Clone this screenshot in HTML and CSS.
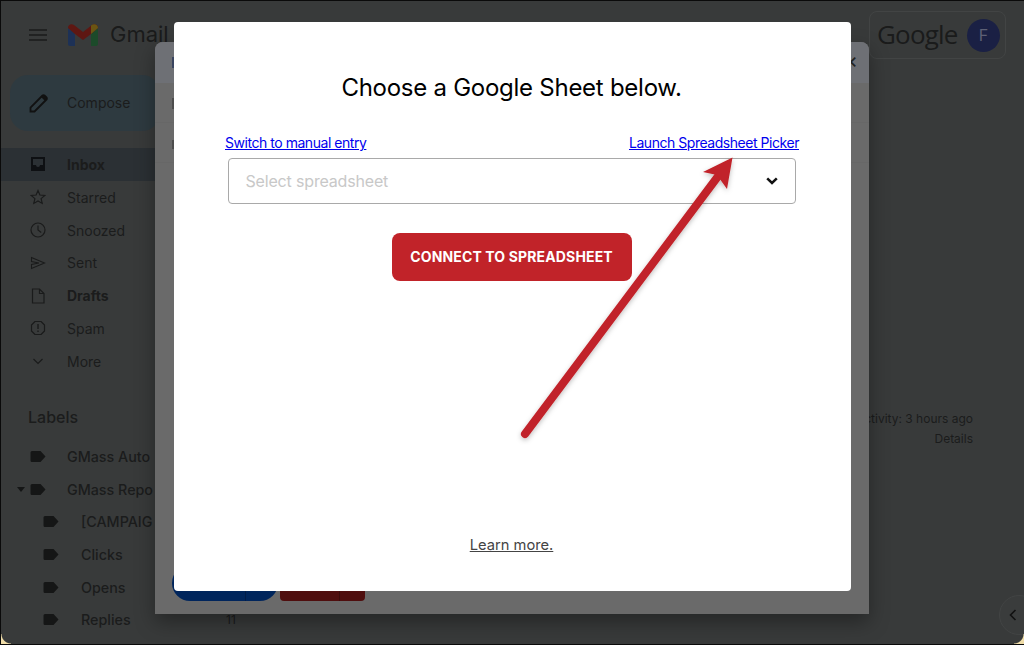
FILE: index.html
```html
<!DOCTYPE html>
<html lang="en">
<head>
<meta charset="utf-8">
<title>Choose a Google Sheet</title>
<link rel="stylesheet" href="styles.css">
</head>
<body>
<div class="window">
  <header class="topbar">
    <svg class="menu-icon" width="18" height="12" viewBox="0 0 18 12"><path d="M0 1h18M0 6h18M0 11h18" stroke="#1a1b1b" stroke-width="1.7"/></svg>
    <svg class="m-logo" width="30" height="23" viewBox="0 0 30 23">
      <path d="M0 4v16a2 2 0 0 0 2 2h5V10z" fill="#1d3156"/>
      <path d="M30 4v16a2 2 0 0 1-2 2h-5V10z" fill="#1c4a2a"/>
      <path d="M0 4c0-4 4-4.500 6-3l9 7 9-7c2-1.500 6-1 6 3l-7 6-8 6-8-6z" fill="#5e1712"/>
      <path d="M23 1.500c3-2.500 7-1 7 2.500l-7 6z" fill="#6b5512"/>
    </svg>
    <span class="brand">Gmail</span>
    <div class="account">
      <span class="google">Google</span>
      <span class="avatar">F</span>
    </div>
  </header>
  <div class="workspace">
    <nav class="sidebar">
      <div class="compose">
        <svg width="20" height="20" viewBox="0 0 20 20"><path d="M1.500 18.500v-4L13.500 2.500a1.400 1.400 0 0 1 2 0l2 2a1.400 1.400 0 0 1 0 2L5.500 18.500z" fill="none" stroke="#111" stroke-width="1.800"/><path d="M12 4l4 4 1.800-2.500-3-3.500z" fill="#111"/></svg>
        <span class="compose-text">Compose</span>
      </div>
      <ul class="folders">
        <li class="folder active"><svg class="ico" viewBox="0 0 16 16"><path d="M1 1h14v14H1z" fill="#0e1013"/><path d="M3 3h10v6h-3a2 2 0 0 1-4 0H3z" fill="#2b3034"/></svg><b>Inbox</b></li>
        <li class="folder"><svg class="ico" viewBox="0 0 16 16"><path d="M8 1.500l1.900 4.500 4.900.4-3.700 3.200 1.100 4.800L8 12l-4.200 2.400 1.100-4.800L1.200 6.400l4.900-.4z" fill="none" stroke="#1a1b1b" stroke-width="1.200"/></svg>Starred</li>
        <li class="folder"><svg class="ico" viewBox="0 0 16 16"><circle cx="8" cy="8" r="7" fill="none" stroke="#1a1b1b" stroke-width="1.200"/><path d="M8 3.500V8l3.200 2.500" fill="none" stroke="#1a1b1b" stroke-width="1.200"/></svg>Snoozed</li>
        <li class="folder"><svg class="ico" viewBox="0 0 16 16"><path d="M1.500 2.500L14.500 8 1.500 13.500V9.500L9 8 1.500 6.500z" fill="none" stroke="#1a1b1b" stroke-width="1.100"/></svg>Sent</li>
        <li class="folder"><svg class="ico" viewBox="0 0 16 16"><path d="M2.500 1h7L14 5.500V15H2.500zM9.500 1v4.500H14" fill="none" stroke="#1a1b1b" stroke-width="1.200"/></svg><b>Drafts</b></li>
        <li class="folder"><svg class="ico" viewBox="0 0 16 16"><path d="M5 1.500h6L14.500 5v6L11 14.500H5L1.500 11V5z" fill="none" stroke="#1a1b1b" stroke-width="1.200" stroke-linejoin="round"/><path d="M8 4v5M8 10.500v1.500" stroke="#1a1b1b" stroke-width="1.400"/></svg>Spam</li>
        <li class="folder"><svg class="ico" viewBox="0 0 16 16"><path d="M3.500 6L8 10.500 12.500 6" fill="none" stroke="#1a1b1b" stroke-width="1.200"/></svg>More</li>
      </ul>
      <h2 class="labels-title">Labels</h2>
      <ul class="labels">
        <li class="label"><svg class="tag" viewBox="0 0 15 11"><path d="M1.500 0H10l5 5.500L10 11H1.500A1.500 1.500 0 0 1 0 9.500v-8A1.500 1.500 0 0 1 1.500 0z" fill="#151616"/></svg><b>GMass Auto</b></li>
        <li class="label has-caret"><svg class="tag" viewBox="0 0 15 11"><path d="M1.500 0H10l5 5.500L10 11H1.500A1.500 1.500 0 0 1 0 9.500v-8A1.500 1.500 0 0 1 1.500 0z" fill="#151616"/></svg><b>GMass Repo</b></li>
        <li class="label sub"><svg class="tag" viewBox="0 0 15 11"><path d="M1.500 0H10l5 5.500L10 11H1.500A1.500 1.500 0 0 1 0 9.500v-8A1.500 1.500 0 0 1 1.500 0z" fill="#151616"/></svg><b>[CAMPAIG</b></li>
        <li class="label sub"><svg class="tag" viewBox="0 0 15 11"><path d="M1.500 0H10l5 5.500L10 11H1.500A1.500 1.500 0 0 1 0 9.500v-8A1.500 1.500 0 0 1 1.500 0z" fill="#151616"/></svg><b>Clicks</b></li>
        <li class="label sub"><svg class="tag" viewBox="0 0 15 11"><path d="M1.500 0H10l5 5.500L10 11H1.500A1.500 1.500 0 0 1 0 9.500v-8A1.500 1.500 0 0 1 1.500 0z" fill="#151616"/></svg><b>Opens</b></li>
        <li class="label sub"><svg class="tag" viewBox="0 0 15 11"><path d="M1.500 0H10l5 5.500L10 11H1.500A1.500 1.500 0 0 1 0 9.500v-8A1.500 1.500 0 0 1 1.500 0z" fill="#151616"/></svg><b>Replies</b><span class="count">11</span></li>
      </ul>
    </nav>
    <main class="activity">
      <span>Last account activity: 3 hours ago</span>
      <span>Details</span>
    </main>
  </div>
  <div class="side-toggle"><svg width="8" height="12" viewBox="0 0 8 12"><path d="M6.500 1L1.500 6l5 5" fill="none" stroke="#111" stroke-width="1.600"/></svg></div>
  <span class="corner corner-left"></span>
  <span class="corner corner-right"></span>

  <section class="back-dialog">
    <div class="back-head"><i class="stub stub-dark"></i><span class="back-x">×</span></div>
    <div class="back-row"><i class="stub"></i></div>
    <div class="back-row"><i class="stub stub-s"></i></div>
    <div class="back-actions">
      <span class="back-blue"></span>
      <span class="back-red"></span>
    </div>
  </section>

  <section class="dialog">
    <h1 class="dialog-title">Choose a Google Sheet below.</h1>
    <div class="link-row">
      <a href="#">Switch to manual entry</a>
      <a href="#">Launch Spreadsheet Picker</a>
    </div>
    <div class="select">
      <span>Select spreadsheet</span>
      <svg width="12" height="8" viewBox="0 0 12 8"><path d="M1.200 1.300L6 6l4.800-4.700" fill="none" stroke="#111" stroke-width="2.500"/></svg>
    </div>
    <button class="connect" type="button">CONNECT TO SPREADSHEET</button>
    <a class="learn" href="#">Learn more.</a>
  </section>

  <svg class="arrow" width="1024" height="645" viewBox="0 0 1024 645">
    <defs><filter id="soft" x="-20%" y="-20%" width="140%" height="140%"><feDropShadow dx="0" dy="2" stdDeviation="2.500" flood-color="#000" flood-opacity=".25"/></filter></defs>
    <g filter="url(#soft)">
      <path d="M525 434L719 175" fill="none" stroke="#c12329" stroke-width="8" stroke-linecap="round"/>
      <path d="M732.500 157.500L703 172 717 175 727 189z" fill="#c12329"/>
    </g>
  </svg>
</div>
</body>
</html>
```
FILE: styles.css
```css
* { box-sizing: border-box; }
html, body { margin: 0; padding: 0; }
body { width: 1024px; height: 645px; overflow: hidden; background: #000; font-family: Inter, "Liberation Sans", sans-serif; }
ul { list-style: none; margin: 0; padding: 0; }
.window { position: relative; width: 1024px; height: 645px; overflow: hidden; background: #383a3a; border-left: 1px solid #0a0a0a; border-top: 1px solid #0a0a0a; border-bottom: 1px solid #0a0a0a; color: #1b1c1c; display: flex; flex-direction: column; }
.topbar { height: 74px; display: flex; align-items: center; padding: 0 18px 6px 28px; flex: none; }
.menu-icon { flex: none; }
.m-logo { margin-left: 21px; flex: none; }
.brand { margin-left: 12px; font-size: 22px; line-height: 26px; margin-bottom: 2px; color: #1a1b1b; }
.account { margin-left: auto; width: 137px; height: 48px; border: 1px solid #424444; border-radius: 8px; display: flex; align-items: center; justify-content: space-between; padding: 0 5px 0 7px; }
.google { font-family: "Open Sans", sans-serif; font-size: 26px; line-height: 30px; margin-bottom: 2px; letter-spacing: -.8px; color: #1a1b1b; }
.avatar { width: 33px; height: 33px; border-radius: 50%; background: #1a2044; color: #5d6075; font-size: 16px; display: flex; align-items: center; justify-content: center; }
.workspace { flex: 1; display: flex; min-height: 0; }
.sidebar { width: 154px; flex: none; }
.compose { margin-left: 9px; width: 150px; height: 56px; border-radius: 18px; background: #2e3a40; display: flex; align-items: center; gap: 18px; padding-left: 19px; font-size: 14px; }
.compose-text { margin-bottom: 2px; }
.folders { margin-top: 17.1px; }
.folder { height: 32.8px; padding-left: 29px; display: flex; align-items: center; gap: 21px; font-size: 14px; }
.folder b { font-weight: 700; }
.folder.active { background: #2b3034; }
.ico { width: 16px; height: 16px; flex: none; }
.labels-title { margin: 27px 0 0 27px; height: 34px; font-size: 16px; font-weight: 500; line-height: 24px; }
.labels { margin-top: 1.4px; }
.label { height: 32.7px; padding-left: 29px; display: flex; align-items: center; gap: 21px; font-size: 14.3px; position: relative; white-space: nowrap; }
.label b { font-weight: 500; }
.label.sub { padding-left: 42px; gap: 22px; }
.label.has-caret::before { content: ""; position: absolute; left: 16px; top: 14px; border: 4px solid transparent; border-top: 5px solid #151616; border-bottom: 0; }
.tag { width: 16px; height: 11px; flex: none; }
.count { position: absolute; left: 225px; font-size: 12px; }
.activity { flex: 1; display: flex; flex-direction: column; align-items: flex-end; gap: 6px; padding: 337px 51px 0 0; font-size: 12px; line-height: 14px; }
.side-toggle { position: absolute; left: 998px; top: 594px; width: 40px; height: 40px; border-radius: 50%; background: #3a3c3c; border: 1px solid #424444; display: flex; align-items: center; padding-left: 9px; }
.corner { position: absolute; width: 10px; height: 10px; bottom: 0; background: #383a3a; }
.corner-left { left: 0; background: radial-gradient(circle at 100% 0, transparent 9px, #f0dda8 10px); }
.corner-right { right: 0; background: radial-gradient(circle at 0 0, transparent 9px, #f0dda8 10px); }
.back-dialog { position: absolute; left: 154px; top: 41px; width: 714px; height: 572px; background: #6a6a6a; border-radius: 8px 8px 0 0; box-shadow: 0 8px 20px rgba(0,0,0,.35); display: flex; flex-direction: column; overflow: hidden; }
.back-head { height: 41px; flex: none; background: #6e7075; position: relative; padding: 15px 0 0 17px; }
.back-x { position: absolute; right: 11px; top: 4px; font-size: 22px; line-height: 28px; color: #222; }
.back-row { height: 40px; border-bottom: 1px solid #676767; padding: 15px 0 0 17px; flex: none; }
.stub { display: block; width: 8px; height: 11px; background: #4d4d4d; }
.stub-dark { background: #3a4560; }
.stub-s { height: 9px; margin-top: 2px; }
.back-actions { margin-top: auto; display: flex; gap: 2px; padding: 0 0 13px 17px; }
.back-blue { width: 106px; height: 36px; background: linear-gradient(90deg, #00255c 73px, #001c48 73px, #001c48 74px, #00255c 74px); border-radius: 18px; }
.back-red { width: 85px; height: 32px; margin-top: 4px; background: linear-gradient(90deg, #4f0e0e 59px, #3c0a0a 59px, #3c0a0a 60px, #4f0e0e 60px); border-radius: 0 0 4px 4px; }
.dialog { position: absolute; left: 173px; top: 21px; width: 677px; height: 569px; background: #fff; border-radius: 4px; display: flex; flex-direction: column; align-items: center; padding: 50px 53px 36px 51px; }
.dialog-title { margin: 0; font-size: 24px; font-weight: 400; line-height: 32px; letter-spacing: -.26px; color: #000; }
.link-row { align-self: stretch; margin: 28px 1px 0 0; display: flex; justify-content: space-between; font-size: 14px; line-height: 22px; letter-spacing: -.46px; margin-right: -1px; }
.link-row a { color: #0000ee; }
.select { margin-top: 4px; width: 568px; flex: none; height: 46px; border: 1px solid #a9a9a9; border-radius: 4px; display: flex; align-items: center; justify-content: space-between; padding: 0 17px; font-size: 16px; letter-spacing: -.17px; color: #c8c8c8; }
.connect { margin-top: 29px; width: 240px; height: 48px; background: #c12329; color: #fff; border: 0; border-radius: 8px; font: 700 14px Inter, "Liberation Sans", sans-serif; letter-spacing: .14px; padding: 0 0 2px; }
.learn { margin-top: auto; font-size: 14.7px; line-height: 20px; color: #444; }
.arrow { position: absolute; left: -1px; top: -1px; pointer-events: none; }
```
